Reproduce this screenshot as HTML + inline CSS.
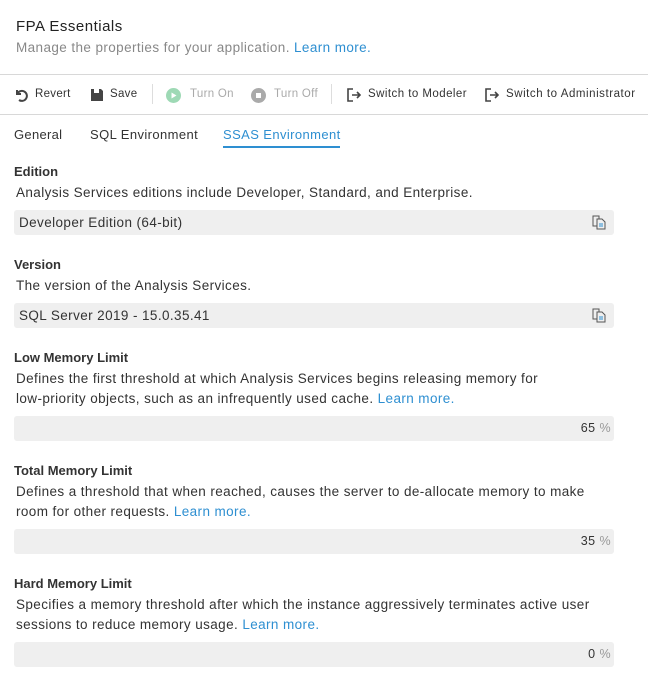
<!DOCTYPE html>
<html><head><style>
*{margin:0;padding:0;box-sizing:border-box}
body{width:648px;height:682px;background:#fff;font-family:"Liberation Sans",sans-serif;color:#333;position:relative;overflow:hidden}
.a{position:absolute;white-space:nowrap;line-height:16px}
.t{font-size:15px;color:#222;letter-spacing:0.5px}
.s{font-size:13.5px;color:#888;letter-spacing:0.4px}
.l{color:#2e8fd1}
.tb{font-size:11.5px;color:#333;top:86px;letter-spacing:0.3px}
.dis{color:#aaa}
.lab{font-size:13px;font-weight:bold;color:#333;left:14px}
.d{font-size:13.5px;color:#333;left:16px;letter-spacing:0.4px}
.box{position:absolute;left:14px;width:600px;height:25px;background:#efefef;border-radius:3px;font-size:13.5px;letter-spacing:0.4px;line-height:25px;color:#333}
.box span.v{position:absolute;left:5px}
.box .r{position:absolute;right:3px;font-size:12.5px}
.box .r b{font-weight:normal;color:#999;margin-left:4px}
.hr{position:absolute;left:0;width:648px;height:1px;background:#d8d8d8}
.ico{position:absolute;top:88px}
</style></head><body>
<div class="a t" style="left:16px;top:19px">FPA Essentials</div>
<div class="a s" style="left:16px;top:40px">Manage the properties for your application. <span class="l">Learn more.</span></div>
<div class="hr" style="top:74px"></div>
<div class="hr" style="top:114px"></div>
<svg class="ico" style="left:14px" width="14" height="14" viewBox="0 0 14 14"><path d="M3 2v4h4M3.5 5.5A5 5 0 1 1 5 12" fill="none" stroke="#444" stroke-width="2"/></svg>
<div class="a tb" style="left:35px">Revert</div>
<svg class="ico" style="left:90px" width="14" height="14" viewBox="0 0 14 14"><path d="M1 1h10l2 2v10H1z" fill="#444"/><rect x="4" y="1" width="5" height="4" fill="#fff"/></svg>
<div class="a tb" style="left:110px">Save</div>
<div style="position:absolute;left:152px;top:84px;width:1px;height:20px;background:#ddd"></div>
<svg class="ico" style="left:166px" width="15" height="15" viewBox="0 0 15 15"><circle cx="7.5" cy="7.5" r="7.5" fill="#9ed9b5"/><path d="M5.5 4.5l5 3-5 3z" fill="#fff"/></svg>
<div class="a tb dis" style="left:190px">Turn On</div>
<svg class="ico" style="left:251px" width="15" height="15" viewBox="0 0 15 15"><circle cx="7.5" cy="7.5" r="7.5" fill="#aaa"/><rect x="5" y="5" width="5" height="5" fill="#fff"/></svg>
<div class="a tb dis" style="left:274px">Turn Off</div>
<div style="position:absolute;left:331px;top:84px;width:1px;height:20px;background:#ddd"></div>
<svg class="ico" style="left:347px" width="14" height="14" viewBox="0 0 14 14"><path d="M6 1H1v12h5M5 7h8M10 4l3 3-3 3" fill="none" stroke="#444" stroke-width="1.6"/></svg>
<div class="a tb" style="left:368px;letter-spacing:0.45px">Switch to Modeler</div>
<svg class="ico" style="left:485px" width="14" height="14" viewBox="0 0 14 14"><path d="M6 1H1v12h5M5 7h8M10 4l3 3-3 3" fill="none" stroke="#444" stroke-width="1.6"/></svg>
<div class="a tb" style="left:506px;letter-spacing:0.55px">Switch to Administrator</div>
<div class="a" style="left:14px;top:127px;font-size:13px;color:#333;letter-spacing:0.3px">General</div>
<div class="a" style="left:90px;top:127px;font-size:13px;color:#333;letter-spacing:0.4px">SQL Environment</div>
<div class="a" style="left:223px;top:127px;font-size:13px;color:#2e8fd1;letter-spacing:0.4px">SSAS Environment</div>
<div style="position:absolute;left:223px;top:146px;width:117px;height:2px;background:#2e8fd1"></div>

<div class="a lab" style="top:164px">Edition</div>
<div class="a d" style="top:185px">Analysis Services editions include Developer, Standard, and Enterprise.</div>
<div class="box" style="top:210px"><span class="v">Developer Edition (64-bit)</span>
<svg style="position:absolute;right:8px;top:5px" width="14" height="15" viewBox="0 0 14 15"><path d="M1 1h6v10H1z" fill="none" stroke="#555"/><path d="M5 4h5l3 3v7H5z" fill="#efefef" stroke="#555"/><path d="M7 9h4M7 11h4" stroke="#2e8fd1"/></svg></div>

<div class="a lab" style="top:257px">Version</div>
<div class="a d" style="top:278px">The version of the Analysis Services.</div>
<div class="box" style="top:303px"><span class="v">SQL Server 2019 - 15.0.35.41</span>
<svg style="position:absolute;right:8px;top:5px" width="14" height="15" viewBox="0 0 14 15"><path d="M1 1h6v10H1z" fill="none" stroke="#555"/><path d="M5 4h5l3 3v7H5z" fill="#efefef" stroke="#555"/><path d="M7 9h4M7 11h4" stroke="#2e8fd1"/></svg></div>

<div class="a lab" style="top:350px">Low Memory Limit</div>
<div class="a d" style="top:371px">Defines the first threshold at which Analysis Services begins releasing memory for</div>
<div class="a d" style="top:391px">low-priority objects, such as an infrequently used cache. <span class="l">Learn more.</span></div>
<div class="box" style="top:416px"><span class="r">65<b>%</b></span></div>

<div class="a lab" style="top:463px">Total Memory Limit</div>
<div class="a d" style="top:484px">Defines a threshold that when reached, causes the server to de-allocate memory to make</div>
<div class="a d" style="top:504px">room for other requests. <span class="l">Learn more.</span></div>
<div class="box" style="top:529px"><span class="r">35<b>%</b></span></div>

<div class="a lab" style="top:576px">Hard Memory Limit</div>
<div class="a d" style="top:597px">Specifies a memory threshold after which the instance aggressively terminates active user</div>
<div class="a d" style="top:617px">sessions to reduce memory usage. <span class="l">Learn more.</span></div>
<div class="box" style="top:642px"><span class="r">0<b>%</b></span></div>
</body></html>
